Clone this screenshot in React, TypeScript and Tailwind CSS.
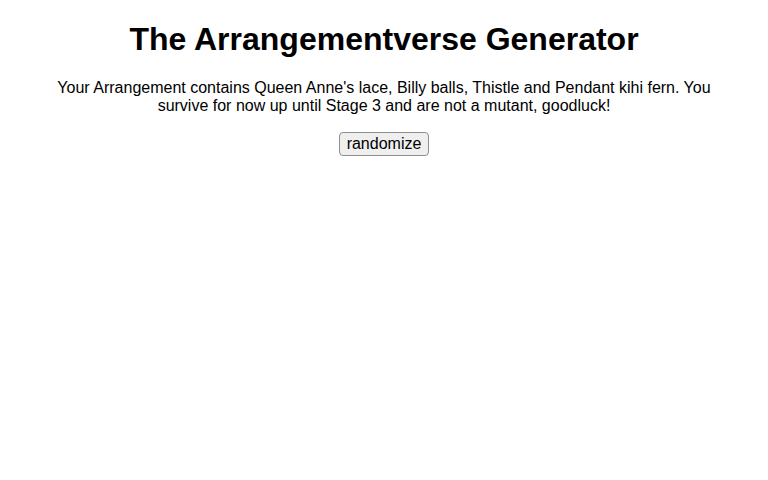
export default function App() {
  return (
    <div
      className="min-h-[480px] bg-white text-center text-black px-[40px]"
      style={{ fontFamily: '"Liberation Sans", Arial, sans-serif' }}
    >
      <h1 className="text-[32px] font-bold leading-[37px] pt-[21px] mb-[21px]">
        The Arrangementverse Generator
      </h1>
      <p className="text-[16px] leading-[18.4px] mb-[16px]">
        Your Arrangement contains Queen Anne's lace, Billy balls, Thistle and Pendant kihi fern. You
        survive for now up until Stage 3 and are not a mutant, goodluck!
      </p>
      <button className="text-[16px] leading-[18.4px] px-[7px] py-[2px] bg-[#efefef] border border-[#8f8f8f] rounded-[4px] text-black">
        randomize
      </button>
    </div>
  );
}
